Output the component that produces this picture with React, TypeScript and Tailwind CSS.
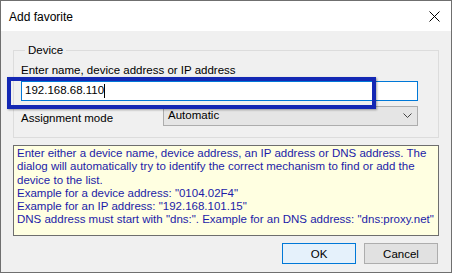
import React from "react";

export default function App() {
  const body = { fontFamily: '"Liberation Sans", Arial, sans-serif' };
  return (
    <div
      className="relative w-[452px] h-[273px] border border-[#6f6f6f] bg-[#f0f0f0] flex flex-col overflow-hidden text-black"
      style={body}
    >
      {/* Title bar */}
      <div className="h-[30px] bg-white flex items-center justify-between pl-[8px] pr-[11px] shrink-0">
        <span className="text-[12px] leading-[14px] mt-[1px]">Add favorite</span>
        <svg width="11" height="11" viewBox="0 0 11 11" className="mt-[1px]">
          <path d="M0.5 0.5 L10.5 10.5 M10.5 0.5 L0.5 10.5" stroke="#000" strokeWidth="1" />
        </svg>
      </div>

      <div className="flex flex-col px-[12px]">
        {/* Group box */}
        <fieldset className="mt-[12px] border border-[#dcdcdc] pl-[7px] pr-[20px] pt-[6px] pb-[11px] m-0">
          <legend className="ml-[4px] px-[3px] text-[11.5px] leading-[14px]">Device</legend>
          <div className="text-[11.5px] leading-[14px]">Enter name, device address or IP address</div>
          <div className="mt-[4px] h-[20px] bg-white border border-[#0078d7] flex items-center pl-[3px] text-[11.5px]">
            <span>192.168.68.110</span>
            <span className="inline-block w-[1px] h-[14px] bg-black" />
          </div>
          <div className="mt-[5px] flex items-center h-[20px]">
            <span className="w-[142px] text-[11.5px] leading-[14px] mt-[3px]">Assignment mode</span>
            <div className="flex-1 h-[20px] bg-[#e5e5e5] border border-[#adadad] flex items-center justify-between pl-[4px] pr-[5px] text-[11.5px]">
              <span>Automatic</span>
              <svg width="9" height="6" viewBox="0 0 9 6">
                <path d="M0.5 0.5 L4.5 4.5 L8.5 0.5" stroke="#444" strokeWidth="1" fill="none" />
              </svg>
            </div>
          </div>
        </fieldset>

        {/* Info box */}
        <div className="mt-[7px] h-[91px] bg-[#ffffe1] border border-[#6e6e6e] pl-[3px] pt-[1px] text-[11.5px] leading-[13.3px] text-[#1c1ca8] whitespace-nowrap">
          <div>Enter either a device name, device address, an IP address or DNS address. The</div>
          <div>dialog will automatically try to identify the correct mechanism to find or add the</div>
          <div>device to the list.</div>
          <div>Example for a device address: "0104.02F4"</div>
          <div>Example for an IP address: "192.168.101.15"</div>
          <div>DNS address must start with "dns:". Example for an DNS address: "dns:proxy.net"</div>
        </div>

        {/* Buttons */}
        <div className="mt-[7px] flex justify-end gap-[8px] pr-[1px]">
          <button className="w-[74px] h-[21px] bg-[#e5f1fb] border border-[#0078d7] text-[11.5px] leading-[14px]">
            OK
          </button>
          <button className="w-[74px] h-[21px] bg-[#e1e1e1] border border-[#adadad] text-[11.5px] leading-[14px]">
            Cancel
          </button>
        </div>
      </div>

      {/* Annotation highlight */}
      <div className="absolute left-[6px] top-[76px] w-[369px] h-[32px] border-[4px] border-[#1428b4] shadow-[1px_1px_2px_rgba(0,0,0,0.35)]" />
    </div>
  );
}
